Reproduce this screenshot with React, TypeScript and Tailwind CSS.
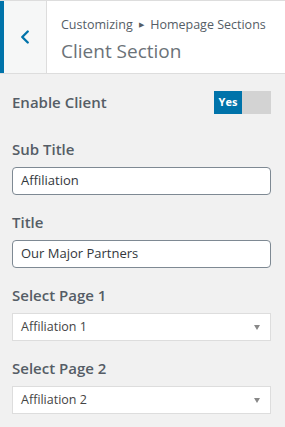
import { ChevronLeft } from 'lucide-react'

const font = { fontFamily: '"Open Sans", "Noto Sans", "Liberation Sans", sans-serif' }

function Field({ label, children }: { label: string; children: React.ReactNode }) {
  return (
    <div className="mb-[17px]">
      <div className="h-5 mb-2 text-[15px] leading-5 font-semibold text-[#555d66]">{label}</div>
      {children}
    </div>
  )
}

function TextInput({ value }: { value: string }) {
  return (
    <div className="h-[28px] rounded-[4px] border border-[#7e8993] bg-white px-2 flex items-center text-[13px] text-[#32373c]">
      {value}
    </div>
  )
}

function Select({ value }: { value: string }) {
  return (
    <div className="h-[28px] border border-[#ddd] bg-white pl-2 pr-[10px] flex items-center justify-between text-[12.5px] text-[#444]">
      <span>{value}</span>
      <span className="w-0 h-0 border-l-[3.5px] border-r-[3.5px] border-t-[5px] border-l-transparent border-r-transparent border-t-[#888]" />
    </div>
  )
}

export default function App() {
  return (
    <div className="w-[285px] h-[427px] overflow-hidden bg-[#f1f1f1]" style={font}>
      {/* Header */}
      <div className="flex h-[74px] border-t border-b border-[#ddd] bg-white">
        <div className="w-[4px] bg-[#0073aa]" />
        <div className="w-[43px] border-r border-[#ddd] bg-[#f6f7f7] flex items-center justify-center">
          <ChevronLeft className="h-[22px] w-[22px] text-[#0073aa]" strokeWidth={2.6} />
        </div>
        <div className="flex-1 pl-[14px] pt-[14px]">
          <div className="text-[12.5px] leading-5 text-[#555d66]">
            Customizing <span className="text-[7px] align-[2px] mx-[3px]">▶</span> Homepage Sections
          </div>
          <div className="text-[19px] leading-7 mt-[2px] text-[#6b7278]">Client Section</div>
        </div>
      </div>

      <div className="pl-3 pr-[14px] pt-4">
        <div className="flex items-center justify-between h-6 mb-[25px]">
          <span className="text-[15px] font-semibold text-[#555d66]">Enable Client</span>
          <div className="flex h-[23px] w-[57px]">
            <div className="w-[28px] bg-[#0073aa] text-white text-[11px] font-bold flex items-center justify-center">Yes</div>
            <div className="flex-1 bg-[#d3d3d3]" />
          </div>
        </div>

        <Field label="Sub Title">
          <TextInput value="Affiliation" />
        </Field>
        <Field label="Title">
          <TextInput value="Our Major Partners" />
        </Field>
        <Field label="Select Page 1">
          <Select value="Affiliation 1" />
        </Field>
        <Field label="Select Page 2">
          <Select value="Affiliation 2" />
        </Field>
      </div>
    </div>
  )
}
